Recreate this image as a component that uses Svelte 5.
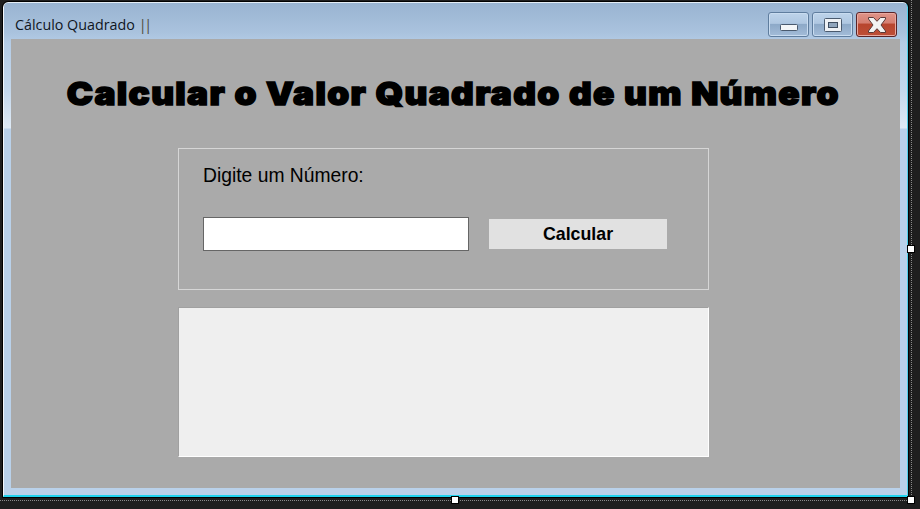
<script lang="ts">
    let numero = $state("")
</script>

<div class="designer">
    <div class="window">
        <header class="titlebar">
            <span class="caption">Cálculo Quadrado<span class="bars">||</span></span>
            <div class="controls">
                <button type="button" class="ctl" aria-label="Minimizar">
                    <svg width="18" height="7" viewBox="0 0 18 7" class="min-glyph">
                        <rect x="0.500" y="0.500" width="17" height="6" rx="1" fill="#f4f6f8" stroke="#4a5a6e"/>
                    </svg>
                </button>
                <button type="button" class="ctl" aria-label="Maximizar">
                    <svg width="18" height="14" viewBox="0 0 18 14">
                        <rect x="0.500" y="0.500" width="17" height="13" rx="1" fill="#eef1f5" stroke="#4a5a6e"/>
                        <rect x="4.500" y="4.500" width="9" height="5" fill="#8fa5bd" stroke="#3f4d60"/>
                    </svg>
                </button>
                <button type="button" class="ctl close" aria-label="Fechar">
                    <svg width="20" height="16" viewBox="0 0 20 16">
                        <path d="M1.500 0.500h5l3.500 3.800 3.500-3.800h5v1.500L14 8l4.500 6v1.500h-5L10 11.700l-3.500 3.800h-5V14L6 8 1.500 2z" fill="#f2f2f2" stroke="#5b3a38"/>
                    </svg>
                </button>
            </div>
        </header>
        <main class="client">
            <h1>Calcular o Valor Quadrado de um Número</h1>
            <section class="group">
                <label for="numero">Digite um Número:</label>
                <div class="row">
                    <input id="numero" type="text" bind:value={numero}>
                    <button type="button" class="calc">Calcular</button>
                </div>
            </section>
            <div class="output"></div>
        </main>
    </div>
    <i class="guide guide-v"></i>
    <i class="guide guide-h"></i>
    <i class="handle h-right"></i>
    <i class="handle h-bottom"></i>
    <i class="handle h-corner"></i>
</div>

<style>
    :global(body) {
        margin: 0;
        background-color: #1e1e1e;
    }

    .designer {
        position: relative;
        width: 920px;
        height: 509px;
        overflow: hidden;
        padding: 2px 0 0 3px;
        box-sizing: border-box;
    }

    .window {
        width: 905px;
        height: 495px;
        box-sizing: border-box;
        display: flex;
        flex-direction: column;
        padding: 0 7px 7px 7px;
        border-radius: 5px 5px 0 0;
        border: 1px solid #e4edf5;
        border-right-color: #4fd0ea;
        border-bottom: 2px solid #1fd3ee;
        border-left-color: #f2f6fa;
        outline: 1px solid #000;
        background: linear-gradient(#99b4d1 0, #aac3de 30px, #b4cce6 40px, #c4d8ec 88px, #dfeaf5 125px, #b9d1ea 126px);
    }

    .titlebar {
        height: 36px;
        flex: none;
        display: flex;
        justify-content: space-between;
    }

    .caption {
        font-family: "Open Sans", sans-serif;
        font-size: 14.300px;
        color: #10161e;
        padding: 12px 0 0 4px;
    }

    .bars {
        color: #4e4a3a;
        letter-spacing: -2.500px;
        margin-left: 4px;
    }

    .controls {
        display: flex;
        gap: 3px;
        padding-top: 9px;
        margin-right: 3px;
    }

    .ctl {
        width: 41px;
        height: 25px;
        padding: 0;
        display: flex;
        align-items: center;
        justify-content: center;
        border: 1px solid #5f7d9e;
        border-radius: 3px;
        box-shadow: inset 0 0 0 1px #c9dcf0;
        background: linear-gradient(#bdd3ea 0, #afc7e1 45%, #8da9c8 50%, #a3bcd8 100%);
    }

    .min-glyph {
        margin-top: 6px;
    }

    .close {
        border-color: #5a2428;
        box-shadow: inset 0 0 0 1px #e8a9a0;
        background: linear-gradient(#e09488 0, #d57f72 42%, #b8452e 50%, #bd4f38 100%);
    }

    .client {
        flex: 1;
        background-color: #aaa;
        display: flex;
        flex-direction: column;
        padding-right: 1px;
    }

    h1 {
        margin: 33px 0 0;
        height: 43px;
        text-align: center;
        padding-right: 3px;
        font-family: "Inter", sans-serif;
        font-size: 32px;
        line-height: 43px;
        font-weight: 900;
        letter-spacing: 1.220px;
        color: #000;
        -webkit-text-stroke: 1.5px #000;
        white-space: nowrap;
        transform: scaleX(1.1);
    }

    .group {
        margin: 33px 0 0 167px;
        width: 531px;
        height: 142px;
        box-sizing: border-box;
        border: 1px solid #d6d6d6;
        padding: 15px 0 0 24px;
    }

    label {
        display: block;
        font-family: "Liberation Sans", sans-serif;
        font-size: 19.300px;
        line-height: 24px;
        color: #000;
    }

    .row {
        margin-top: 29px;
        display: flex;
        align-items: center;
        gap: 20px;
    }

    input {
        width: 266px;
        height: 34px;
        box-sizing: border-box;
        border: 1px solid #666;
        background: #fff;
        padding: 0 4px;
        outline: none;
    }

    .calc {
        width: 178px;
        height: 30px;
        padding: 0;
        border: 0;
        background-color: #e1e1e1;
        font-family: "Liberation Sans", sans-serif;
        font-size: 17.800px;
        font-weight: 700;
        color: #000;
    }

    .output {
        margin: 17px 0 0 167px;
        width: 531px;
        height: 150px;
        box-sizing: border-box;
        background-color: #efefef;
        border: 1px solid;
        border-color: #a0a0a0 #fff #fff #a0a0a0;
    }

    .handle {
        position: absolute;
        width: 6px;
        height: 6px;
        background: #fff;
        border: 1px solid #000;
    }

    .h-right { left: 907px; top: 245px; }
    .h-bottom { left: 451px; top: 496px; }
    .h-corner { left: 907px; top: 496px; }

    .guide {
        position: absolute;
    }

    .guide-v {
        left: 911px;
        top: 0;
        height: 497px;
        border-left: 1px dotted #8a8a8a;
    }

    .guide-h {
        left: 0;
        top: 500px;
        width: 907px;
        border-top: 1px dotted #8a8a8a;
    }
</style>
